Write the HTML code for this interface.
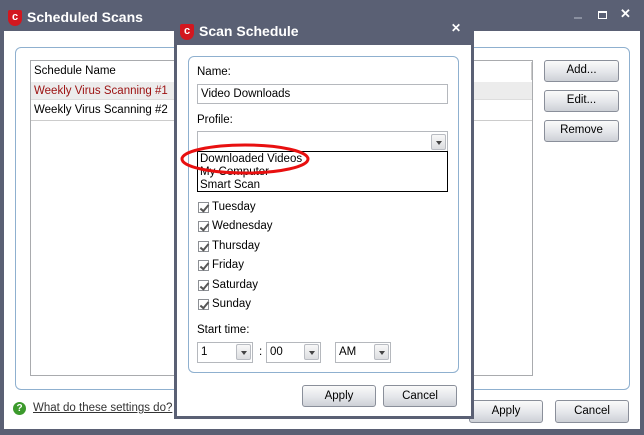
<!DOCTYPE html>
<html><head><style>
*{box-sizing:border-box;margin:0;padding:0}
body{width:644px;height:435px;position:relative;overflow:hidden;background:#fff;font-family:"Liberation Sans",sans-serif;font-size:11.5px;color:#000}
.a{position:absolute}
.title{color:#fff;font-weight:bold;font-size:14px}
.btn{position:absolute;border:1px solid #8a8f9a;border-radius:3px;background:linear-gradient(#fafafa,#e4e6ea 55%,#cdd0d6);text-align:center;line-height:19px;font-size:11.5px}
.grp{position:absolute;border:1px solid #8fb0cf;border-radius:6px}
.inp{position:absolute;border:1px solid #b5b8bd;background:#fff;padding-left:3px;line-height:18px}
.arr{position:absolute;right:1px;top:1px;width:15px;height:16px;border:1px solid #b9bcc2;border-radius:2px;background:linear-gradient(#f8f8f8,#dcdde0)}
.arr:after{content:"";position:absolute;left:4px;top:6px;border-left:3px solid transparent;border-right:3px solid transparent;border-top:4px solid #444}
.cb{position:absolute;left:198px;width:11px;height:11px;border:1px solid #8c8f94;background:#fff}
.cb:after{content:"";position:absolute;left:3px;top:0;width:3px;height:7px;border-right:2px solid #555;border-bottom:2px solid #555;transform:rotate(40deg)}
.lbl{position:absolute;left:212px}
.shield{position:absolute;width:14px;height:16px;background:#d2171f;border-radius:2px 2px 7px 7px;color:#fff;font-weight:bold;font-size:11px;text-align:center;line-height:15px}
</style></head><body>
<div class="a" style="left:0;top:0;width:644px;height:435px;background:#5a6074"></div>
<div class="a" style="left:4px;top:31px;width:636px;height:398px;background:#fff"></div>
<div class="shield" style="left:8px;top:10px">c</div>
<div class="a title" style="left:27px;top:9px">Scheduled Scans</div>
<div class="a" style="left:574px;top:17px;width:8px;height:2px;background:#8a90a0"></div>
<div class="a" style="left:598px;top:11px;width:9px;height:8px;border:1px solid #fff;border-top-width:2px"></div>
<div class="a" style="left:620px;top:6px;color:#fff;font-weight:bold;font-size:13px">✕</div>
<div class="grp" style="left:15px;top:47px;width:615px;height:343px"></div>
<div class="a" style="left:30px;top:60px;width:503px;height:316px;border:1px solid #a9abae"></div>
<div class="a" style="left:34px;top:65px">Schedule Name</div>
<div class="a" style="left:531px;top:62px;width:1px;height:18px;background:#ccc"></div>
<div class="a" style="left:31px;top:82px;width:501px;height:18px;background:#ececec;border-bottom:1px solid #ddd"></div>
<div class="a" style="left:34px;top:85px;color:#9b1010">Weekly Virus Scanning #1</div>
<div class="a" style="left:34px;top:104px">Weekly Virus Scanning #2</div>
<div class="a" style="left:31px;top:120px;width:501px;height:1px;background:#ccc"></div>
<div class="btn" style="left:544px;top:60px;width:75px;height:22px">Add...</div>
<div class="btn" style="left:544px;top:90px;width:75px;height:22px">Edit...</div>
<div class="btn" style="left:544px;top:120px;width:75px;height:22px">Remove</div>
<div class="a" style="left:13px;top:402px;width:13px;height:13px;border-radius:50%;background:#3c9a2c;color:#fff;font-size:10px;font-weight:bold;text-align:center;line-height:13px">?</div>
<div class="a" style="left:33px;top:402px;color:#333;text-decoration:underline">What do these settings do?</div>
<div class="btn" style="left:469px;top:400px;width:74px;height:23px;line-height:21px">Apply</div>
<div class="btn" style="left:555px;top:400px;width:74px;height:23px;line-height:21px">Cancel</div>
<div class="a" style="left:174px;top:15px;width:300px;height:404px;background:#5a6074"></div>
<div class="a" style="left:177px;top:45px;width:294px;height:371px;background:#fff"></div>
<div class="shield" style="left:180px;top:24px">c</div>
<div class="a title" style="left:199px;top:23px">Scan Schedule</div>
<div class="a" style="left:451px;top:21px;color:#fff;font-weight:bold;font-size:12px">✕</div>
<div class="grp" style="left:188px;top:56px;width:271px;height:317px"></div>
<div class="a" style="left:197px;top:66px">Name:</div>
<div class="inp" style="left:197px;top:84px;width:251px;height:20px">Video Downloads</div>
<div class="a" style="left:197px;top:114px">Profile:</div>
<div class="inp" style="left:197px;top:131px;width:251px;height:21px"><div class="arr" style="top:2px"></div></div>
<div class="a" style="left:197px;top:151px;width:251px;height:41px;border:1px solid #000;background:#fff;line-height:13px;padding:1px 0 0 2px">Downloaded Videos<br>My Computer<br>Smart Scan</div>
<svg class="a" style="left:178px;top:140px" width="140" height="40"><ellipse cx="67" cy="19" rx="63" ry="14" fill="none" stroke="#e81010" stroke-width="3"/></svg>
<div class="cb" style="top:202px"></div><div class="lbl" style="top:201px">Tuesday</div>
<div class="cb" style="top:221px"></div><div class="lbl" style="top:220px">Wednesday</div>
<div class="cb" style="top:241px"></div><div class="lbl" style="top:240px">Thursday</div>
<div class="cb" style="top:260px"></div><div class="lbl" style="top:259px">Friday</div>
<div class="cb" style="top:280px"></div><div class="lbl" style="top:279px">Saturday</div>
<div class="cb" style="top:299px"></div><div class="lbl" style="top:298px">Sunday</div>
<div class="a" style="left:197px;top:324px">Start time:</div>
<div class="inp" style="left:197px;top:342px;width:56px;height:21px">1<div class="arr"></div></div>
<div class="a" style="left:259px;top:346px">:</div>
<div class="inp" style="left:266px;top:342px;width:55px;height:21px">00<div class="arr"></div></div>
<div class="inp" style="left:335px;top:342px;width:56px;height:21px">AM<div class="arr"></div></div>
<div class="btn" style="left:302px;top:385px;width:74px;height:22px;line-height:20px">Apply</div>
<div class="btn" style="left:383px;top:385px;width:74px;height:22px;line-height:20px">Cancel</div>
</body></html>
